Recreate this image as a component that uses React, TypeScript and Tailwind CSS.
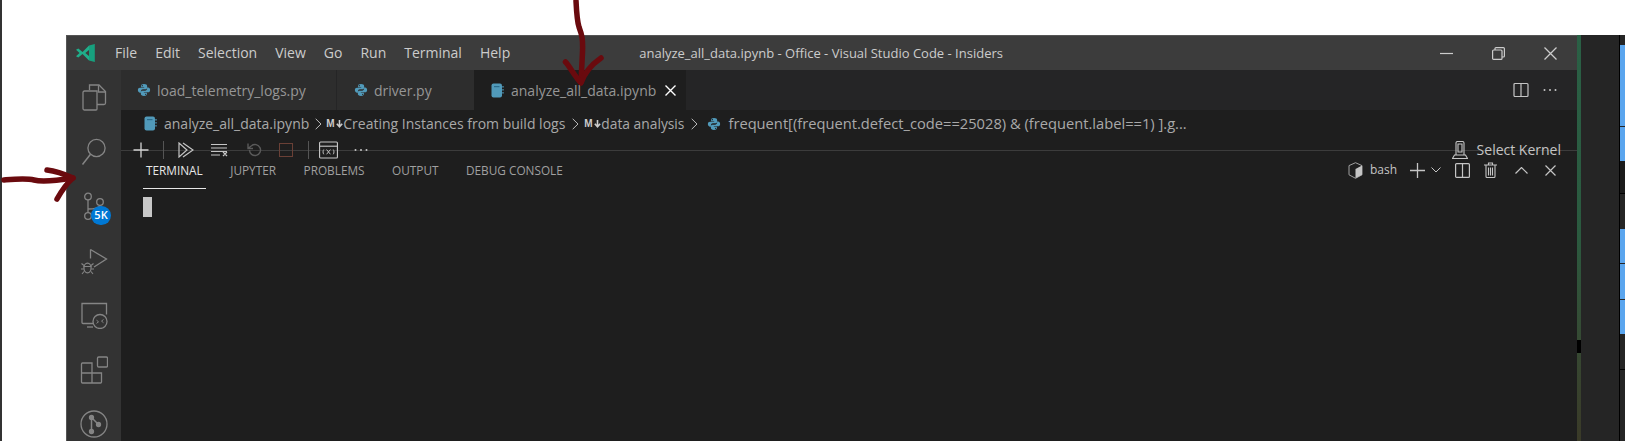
const font = "font-['Open_Sans','Noto_Sans',sans-serif]"

function PythonIcon({ className = '' }: { className?: string }) {
  return (
    <svg viewBox="0 0 16 16" className={`h-[14px] w-[14px] shrink-0 ${className}`} fill="#519aba">
      <path d="M8 1.200c-2.600 0-3.300 1-3.300 2.100v1.500h3.500v.6H3.300C2 5.400 1 6.400 1 8.100s.9 2.900 2.200 2.900h1.300V9.300c0-1.200 1-2.200 2.200-2.200h3.100c1 0 1.800-.8 1.800-1.800V3.300c0-1.100-1-2.100-3.600-2.100zM6.200 2.400a.7.7 0 1 1 0 1.400.7.7 0 0 1 0-1.400z" />
      <path d="M8 14.800c2.600 0 3.300-1 3.300-2.100v-1.500H7.800v-.6h4.900c1.300 0 2.300-1 2.300-2.700s-.9-2.900-2.200-2.900h-1.300v1.700c0 1.200-1 2.200-2.200 2.200H6.200c-1 0-1.800.8-1.800 1.800v2c0 1.100 1 2.100 3.600 2.100zm1.800-1.200a.7.7 0 1 1 0-1.400.7.7 0 0 1 0 1.400z" />
    </svg>
  )
}

function NotebookIcon() {
  return (
    <svg viewBox="0 0 13 15" className="h-[15px] w-[13px] shrink-0">
      <rect x="0.5" y="0.5" width="10.500" height="14" rx="2" fill="#519aba" />
      <rect x="11.400" y="3" width="1.200" height="1.600" fill="#519aba" />
      <rect x="11.400" y="6" width="1.200" height="1.600" fill="#519aba" />
      <rect x="11.400" y="9" width="1.200" height="1.600" fill="#519aba" />
      <rect x="3" y="3" width="5.500" height="1.200" fill="#2b6c8c" />
    </svg>
  )
}

function Chevron() {
  return (
    <svg viewBox="0 0 7 12" className="h-[12px] w-[7px] shrink-0" fill="none" stroke="#bbbbbb" strokeWidth="1">
      <path d="M.7.8 6 6 .7 11.200" />
    </svg>
  )
}

function Markdown() {
  return (
    <span className="flex w-[17px] shrink-0 items-center text-[10px] leading-none font-bold text-[#cccccc] font-['Liberation_Sans',sans-serif]">
      M
      <svg viewBox="0 0 7 8" className="ml-[1px] h-[8px] w-[7px]" fill="none" stroke="#cccccc" strokeWidth="1.600">
        <path d="M3.500 0v6M.8 3.800l2.700 3 2.700-3" />
      </svg>
    </span>
  )
}

function ActivityIcon({ children }: { children: React.ReactNode }) {
  return (
    <svg viewBox="0 0 28 28" width="28" height="28" fill="none" stroke="#858585" strokeWidth="1.300">
      {children}
    </svg>
  )
}

function ActivityBar() {
  return (
    <div className="flex w-[54px] shrink-0 flex-col items-center gap-[26.5px] bg-[#333333] pt-[13px]">
      <ActivityIcon>
        <path d="M9.500 7V2h9.500l6.500 6.500V20a1.500 1.500 0 0 1-1.500 1.500H17" />
        <path d="M18.500 2.300V9h6.800" />
        <path d="M3 9.500a1.500 1.500 0 0 1 1.500-1.500H17v18a1 1 0 0 1-1 1H4.500A1.500 1.500 0 0 1 3 25.500z" />
      </ActivityIcon>
      <ActivityIcon>
        <circle cx="16.500" cy="10" r="8.600" />
        <path d="M10.500 16.200 2.500 26.500" strokeWidth="1.500" />
      </ActivityIcon>
      <div className="relative h-[28px] w-[28px]">
        <ActivityIcon>
          <circle cx="8" cy="4.500" r="3.300" />
          <circle cx="20" cy="10" r="3.300" />
          <circle cx="8" cy="24" r="3.300" />
          <path d="M8 8v12.500M8 17c7 0 11-1 12-3.500" />
        </ActivityIcon>
        <span className="absolute top-[14px] left-[11px] flex h-[19px] w-[20px] items-center justify-center rounded-full bg-[#0078d4] text-[11px] font-semibold text-white">
          5K
        </span>
      </div>
      <ActivityIcon>
        <path d="M10.500 2.500 26.500 12 14 20" />
        <path d="M10.500 2.500v9" />
        <ellipse cx="7.500" cy="21" rx="3.600" ry="4.800" />
        <path d="M3.500 19.500h8M1.500 16.500l2.500 2M13.500 16.500l-2.500 2M1 22h2.500M14 22h-2.500M2 27l2-2.500M13 27l-2-2.500" strokeWidth="1.100" />
      </ActivityIcon>
      <ActivityIcon>
        <path d="M13 22.500H3a1 1 0 0 1-1-1V2.500h24.500v11" />
        <path d="M7 26h6" />
        <circle cx="20" cy="20.500" r="7" />
        <path d="m16.500 19.200 2 1.600-2 1.600M23.500 18.500l-2 1.600 2 1.600" strokeWidth="1" />
      </ActivityIcon>
      <ActivityIcon>
        <rect x="17.500" y="1" width="10" height="10" rx="1.200" />
        <path d="M12 7H2.500a1 1 0 0 0-1 1v18a1 1 0 0 0 1 1h18a1 1 0 0 0 1-1v-9H12zM12 17v10M1.500 17H12" />
      </ActivityIcon>
      <ActivityIcon>
        <circle cx="14" cy="14" r="13" />
        <circle cx="11.500" cy="7.500" r="2" fill="#858585" />
        <circle cx="18.500" cy="14.500" r="2" fill="#858585" />
        <circle cx="11.500" cy="21.500" r="2" fill="#858585" />
        <path d="M11.500 7.500v14M11.500 7.500l7 7" strokeWidth="1.500" />
      </ActivityIcon>
    </div>
  )
}

function TitleBar() {
  return (
    <div className="flex h-[34px] shrink-0 items-center bg-[#3c3c3c] pl-[9px] text-[#cccccc]">
      <svg viewBox="0 0 19 18" className="h-[18px] w-[19px] shrink-0">
        <path d="M0 5.800 2.300 4.600 6.500 8 13 1.500V6L9.300 9 13 12v4.500L6.500 10 2.300 13.400 0 12.200 3.500 9z" fill="#1fae8a" />
        <path d="M13 1.500 18.800 0v18L13 16.500z" fill="#17a07e" />
      </svg>
      <nav className="ml-[20px] flex gap-[18px] text-[14px] leading-none">
        <span>File</span>
        <span>Edit</span>
        <span>Selection</span>
        <span>View</span>
        <span>Go</span>
        <span>Run</span>
        <span>Terminal</span>
        <span>Help</span>
      </nav>
      <span className="ml-[129px] text-[13px] leading-none">analyze_all_data.ipynb - Office - Visual Studio Code - Insiders</span>
      <div className="ml-auto flex items-center gap-[39px] pr-[20px]">
        <svg viewBox="0 0 13 13" className="h-[13px] w-[13px]" stroke="#cccccc" strokeWidth="1.200" fill="none">
          <path d="M0 6.500h13" />
        </svg>
        <svg viewBox="0 0 13 13" className="h-[13px] w-[13px]" stroke="#cccccc" strokeWidth="1.200" fill="none">
          <rect x="0.6" y="3" width="9.400" height="9.400" rx="1" />
          <path d="M3 3V1.600a1 1 0 0 1 1-1h7.400a1 1 0 0 1 1 1V9a1 1 0 0 1-1 1H10" />
        </svg>
        <svg viewBox="0 0 13 13" className="h-[13px] w-[13px]" stroke="#cccccc" strokeWidth="1.300" fill="none">
          <path d="M.5.5l12 12M12.500.5l-12 12" />
        </svg>
      </div>
    </div>
  )
}

function Tabs() {
  return (
    <div className="flex h-[40px] shrink-0 items-center bg-[#252526] text-[14px] text-[#969696]">
      <div className="flex h-full w-[216px] items-center gap-[6px] border-r border-[#252526] bg-[#2d2d2d] pl-[16px]">
        <PythonIcon />
        <span>load_telemetry_logs.py</span>
      </div>
      <div className="flex h-full w-[137px] items-center gap-[6px] bg-[#2d2d2d] pl-[17px]">
        <PythonIcon />
        <span>driver.py</span>
      </div>
      <div className="flex h-full w-[212px] items-center gap-[7px] bg-[#1e1e1e] pl-[17px]">
        <NotebookIcon />
        <span>analyze_all_data.ipynb</span>
        <svg viewBox="0 0 11 11" className="ml-[2px] h-[11px] w-[11px]" stroke="#ffffff" strokeWidth="1.400" fill="none">
          <path d="M.5.5l10 10M10.500.5l-10 10" />
        </svg>
      </div>
      <div className="ml-auto flex items-center gap-[14px] pr-[20px]">
        <svg viewBox="0 0 16 16" className="h-[16px] w-[16px]" stroke="#c5c5c5" strokeWidth="1.200" fill="none">
          <rect x="1" y="1.500" width="14" height="13" rx="1" />
          <path d="M8 1.500v13" />
        </svg>
        <svg viewBox="0 0 14 4" className="h-[4px] w-[14px]" fill="#c5c5c5">
          <circle cx="1.500" cy="2" r="1" />
          <circle cx="7" cy="2" r="1" />
          <circle cx="12.500" cy="2" r="1" />
        </svg>
      </div>
    </div>
  )
}

function Breadcrumbs() {
  return (
    <div className="flex h-[27px] shrink-0 items-center pl-[23px] text-[14px] leading-none text-[#a9a9a9]">
      <NotebookIcon />
      <span className="ml-[7px]">analyze_all_data.ipynb</span>
      <span className="mr-[4px] ml-[6px]"><Chevron /></span>
      <Markdown />
      <span>Creating Instances from build logs</span>
      <span className="mr-[5px] ml-[7px]"><Chevron /></span>
      <Markdown />
      <span className="text-[13.8px]">data analysis</span>
      <span className="mr-[9px] ml-[7px]"><Chevron /></span>
      <PythonIcon />
      <span className="ml-[7px] text-[14.7px]">frequent[(frequent.defect_code==25028) &amp; (frequent.label==1) ].g...</span>
    </div>
  )
}

function NotebookToolbar() {
  return (
    <div className="relative flex h-[26px] shrink-0 items-center pl-[12px] text-[#c5c5c5]">
      <div className="absolute top-[13px] right-0 left-0 h-[1px] bg-[#3c3c3c]" />
      <svg viewBox="0 0 16 16" className="relative h-[16px] w-[16px]" stroke="#d4d4d4" strokeWidth="1.300" fill="none">
        <path d="M8 .5v15M.5 8h15" />
      </svg>
      <div className="relative mx-[14px] h-[18px] w-[1px] bg-[#555555]" />
      <svg viewBox="0 0 16 16" className="relative h-[16px] w-[16px]" stroke="#c5c5c5" strokeWidth="1.200" fill="none">
        <path d="M1 1v14l8-7zM5 1l10 7-10 7" />
      </svg>
      <svg viewBox="0 0 18 14" className="relative ml-[17px] h-[14px] w-[18px]" stroke="#c5c5c5" strokeWidth="1.200" fill="none">
        <path d="M0 1.500h16M0 5h16M0 8.500h16M0 12h9M12 9l4 4M16 9l-4 4" />
      </svg>
      <svg viewBox="0 0 16 16" className="relative ml-[17px] h-[16px] w-[16px]" stroke="#5a5a5a" strokeWidth="1.400" fill="none">
        <path d="M3.500 8a5.500 5.500 0 1 0 2-4.200L2 6.500M2 1.500v5h5" />
      </svg>
      <div className="relative ml-[17px] h-[14px] w-[14px] border border-[#6a4036]" />
      <div className="relative mr-[10px] ml-[15px] h-[18px] w-[1px] bg-[#555555]" />
      <svg viewBox="0 0 20 18" className="relative h-[18px] w-[19px]" stroke="#c5c5c5" strokeWidth="1.200" fill="none">
        <rect x="0.6" y="0.6" width="18.800" height="16.800" rx="1" />
        <path d="M.6 5h18.800" />
        <path d="M5 8.500c-1 1.500-1 3.500 0 5M15 8.500c1 1.500 1 3.500 0 5M8 8.500l4 5M12 8.500l-4 5" strokeWidth="1" />
      </svg>
      <svg viewBox="0 0 14 4" className="relative ml-[16px] h-[4px] w-[14px]" fill="#c5c5c5">
        <circle cx="1.500" cy="2" r="1" />
        <circle cx="7" cy="2" r="1" />
        <circle cx="12.500" cy="2" r="1" />
      </svg>
      <div className="relative ml-auto flex items-center gap-[9px] pr-[16px] text-[14px] leading-none text-[#c5c5c5]">
        <svg viewBox="0 0 16 18" className="h-[18px] w-[16px]" stroke="#c5c5c5" strokeWidth="1.100" fill="none">
          <path d="M4 14V2a1.500 1.500 0 0 1 1.500-1.500h5A1.500 1.500 0 0 1 12 2v12" />
          <path d="M6 3h4v8H6z" />
          <path d="M2.500 14h11l2 3.500H.5z" />
        </svg>
        <span>Select Kernel</span>
      </div>
    </div>
  )
}

function Panel() {
  return (
    <div className="-mt-[1px] flex shrink-0 items-start pl-[22px] text-[#c5c5c5]">
      <div className="flex gap-[27.5px] text-[11.8px] leading-[16px] text-[#a0a0a0]">
        <div className="mr-[-3px] flex flex-col">
          <span className="px-[3px] text-[#e7e7e7]">TERMINAL</span>
          <div className="mt-[10px] h-[1px] bg-[#e7e7e7]" />
        </div>
        <span>JUPYTER</span>
        <span>PROBLEMS</span>
        <span>OUTPUT</span>
        <span>DEBUG CONSOLE</span>
      </div>
      <div className="ml-auto flex h-[16px] items-center pr-[21px]">
        <svg viewBox="0 0 15 17" className="h-[17px] w-[15px]" fill="none">
          <path d="M7.500.7 14 3.600v9.200l-6.500 3.500L1 12.800V3.600z" stroke="#a0a0a0" strokeWidth="1" />
          <path d="M7.500 7 14 3.600v9.200l-6.500 3.500z" fill="#c5c5c5" />
        </svg>
        <span className="ml-[7px] text-[12px] leading-none">bash</span>
        <svg viewBox="0 0 15 15" className="ml-[13px] h-[15px] w-[15px]" stroke="#c5c5c5" strokeWidth="1.300" fill="none">
          <path d="M7.500 0v15M0 7.500h15" />
        </svg>
        <svg viewBox="0 0 10 6" className="ml-[6px] h-[6px] w-[10px]" stroke="#c5c5c5" strokeWidth="1" fill="none">
          <path d="M.5.5 5 5 9.500.5" />
        </svg>
        <svg viewBox="0 0 15 15" className="ml-[14px] h-[15px] w-[15px]" stroke="#c5c5c5" strokeWidth="1.200" fill="none">
          <rect x="0.6" y="0.6" width="13.800" height="13.800" rx="1" />
          <path d="M7.500.6v13.800" />
        </svg>
        <svg viewBox="0 0 13 16" className="ml-[14px] h-[16px] w-[13px]" stroke="#c5c5c5" strokeWidth="1.100" fill="none">
          <path d="M0 3h13M4.500 3V1h4v2" />
          <path d="M2 3v11.500a1 1 0 0 0 1 1h7a1 1 0 0 0 1-1V3" />
          <path d="M4.500 5.500v8M6.500 5.500v8M8.500 5.500v8" />
        </svg>
        <svg viewBox="0 0 13 7" className="ml-[18px] h-[7px] w-[13px]" stroke="#c5c5c5" strokeWidth="1.200" fill="none">
          <path d="M.5 6.500l6-6 6 6" />
        </svg>
        <svg viewBox="0 0 11 11" className="ml-[17px] h-[11px] w-[11px]" stroke="#c5c5c5" strokeWidth="1.200" fill="none">
          <path d="M.5.5l10 10M10.500.5l-10 10" />
        </svg>
      </div>
    </div>
  )
}

function RightStrip() {
  return (
    <div className="flex w-[6px] shrink-0 flex-col border-l border-black bg-[#252525]">
      <div className="h-[10px]" />
      <div className="h-[81px] bg-[#5aa5ee]" />
      <div className="mt-[1px] h-[34px] bg-[#5aa5ee]" />
      <div className="h-[32px] bg-[#1b1b1b]" />
      <div className="h-[36px] border-t border-black" />
      <div className="h-[34px] bg-[#5aa5ee]" />
      <div className="mt-[1px] h-[35px] bg-[#5aa5ee]" />
      <div className="mt-[1px] h-[34px] bg-[#5aa5ee]" />
      <div className="h-[36px] border-b border-black" />
    </div>
  )
}

export default function App() {
  return (
    <div className={`relative flex h-[441px] w-[1625px] overflow-hidden bg-white ${font}`}>
      <div className="w-[2px] shrink-0 bg-[#333333]" />
      <div className="w-[64px] shrink-0" />
      <div className="flex min-w-0 flex-1 pt-[35px]">
        <div className="flex flex-1 flex-col border-t border-l border-[#555555]">
          <TitleBar />
          <div className="flex flex-1">
            <ActivityBar />
            <div className="flex min-w-0 flex-1 flex-col bg-[#1e1e1e]">
              <Tabs />
              <Breadcrumbs />
              <NotebookToolbar />
              <Panel />
              <div className="mt-[8px] ml-[22px] h-[20px] w-[9px] bg-[#c8c8c8]" />
            </div>
          </div>
        </div>
        <div className="relative w-[4px] shrink-0 bg-gradient-to-b from-[#2a6045] via-[#2b5a3f] to-[#3a3a28]">
          <div className="absolute top-[305px] left-0 h-[13px] w-[4px] bg-black" />
        </div>
        <div className="w-[38px] shrink-0 bg-[#252525]" />
        <RightStrip />
      </div>
      <svg className="pointer-events-none absolute inset-0" width="1625" height="441" fill="none" stroke="#6a0a0e" strokeWidth="5.500" strokeLinecap="round" strokeLinejoin="round">
        <path d="M576 1c.5 10 1 20 3 26 3 8 4 12 3.500 25L581 82" />
        <path d="M565.500 62c4 4 9 14 15.500 21 3-9 10-18 20-25" />
        <path d="M4 180c12-1 22-2 30 0s20 1 39-2" />
        <path d="M47 170c8 1 17 4 26 8-6 5-12 14-16 21" />
      </svg>
    </div>
  )
}
